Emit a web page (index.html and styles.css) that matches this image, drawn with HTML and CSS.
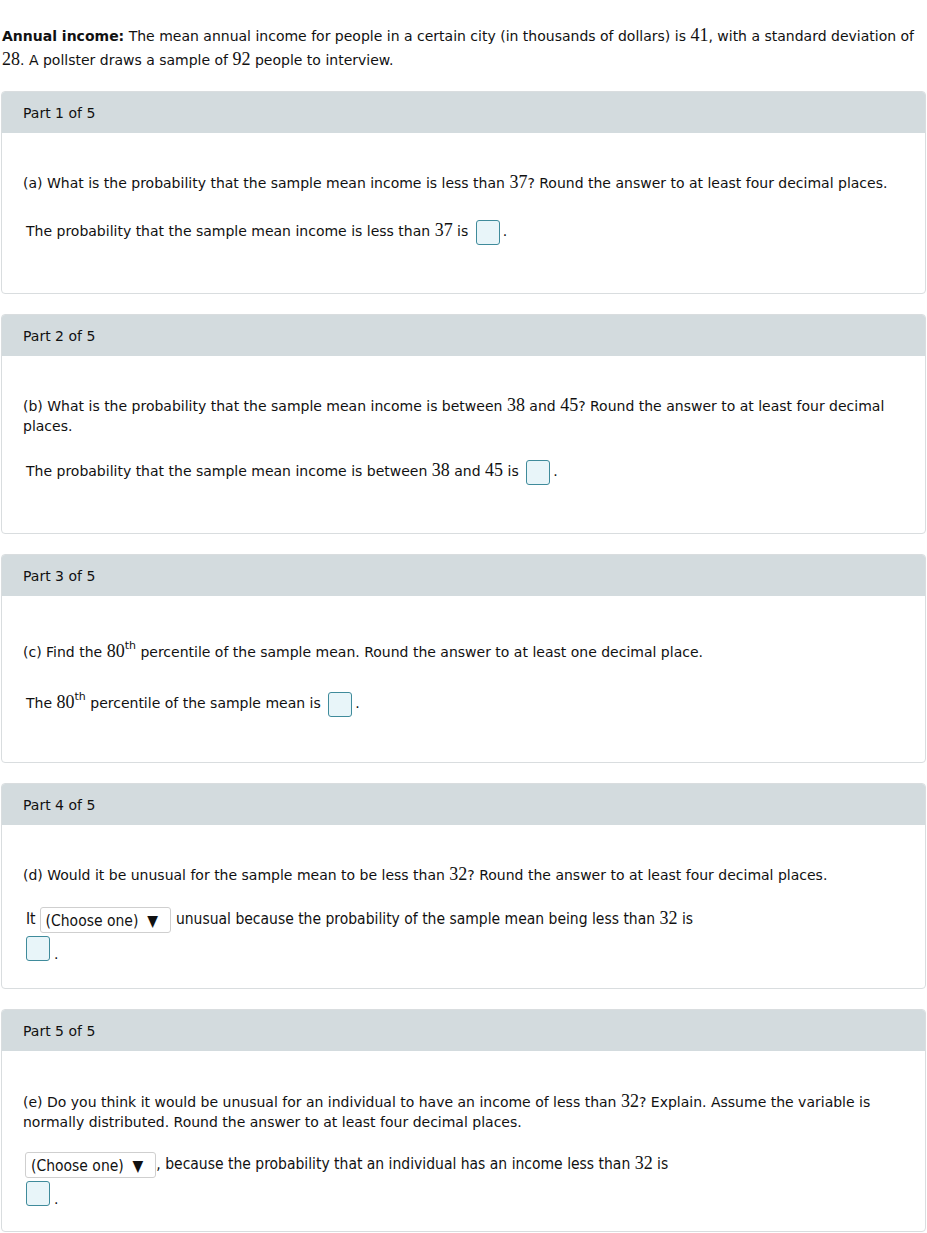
FILE: index.html
```html
<!DOCTYPE html>
<html>
<head>
<meta charset="utf-8">
<link rel="stylesheet" href="styles.css">
</head>
<body>
<p class="intro"><b>Annual income:</b> The mean annual income for people in a certain city (in thousands of dollars) is <span class="m">41</span>, with a standard deviation of <span class="m">28</span>. A pollster draws a sample of <span class="m">92</span> people to interview.</p>

<div class="card">
  <div class="head">Part 1 of 5</div>
  <div class="body">
    <p class="q q1">(a) What is the probability that the sample mean income is less than <span class="m">37</span>? Round the answer to at least four decimal places.</p>
    <p class="a">The probability that the sample mean income is less than <span class="m">37</span> is <span class="box"></span><span class="pd">.</span></p>
  </div>
</div>

<div class="card">
  <div class="head">Part 2 of 5</div>
  <div class="body">
    <p class="q">(b) What is the probability that the sample mean income is between <span class="m">38</span> and <span class="m">45</span>? Round the answer to at least four decimal places.</p>
    <p class="a">The probability that the sample mean income is between <span class="m">38</span> and <span class="m">45</span> is <span class="box"></span><span class="pd">.</span></p>
  </div>
</div>

<div class="card">
  <div class="head">Part 3 of 5</div>
  <div class="body b3">
    <p class="q q3">(c) Find the <span class="m">80</span><sup>th</sup> percentile of the sample mean. Round the answer to at least one decimal place.</p>
    <p class="a">The <span class="m">80</span><sup>th</sup> percentile of the sample mean is <span class="box"></span><span class="pd">.</span></p>
  </div>
</div>

<div class="card">
  <div class="head">Part 4 of 5</div>
  <div class="body tight b4">
    <p class="q q4">(d) Would it be unusual for the sample mean to be less than <span class="m">32</span>? Round the answer to at least four decimal places.</p>
    <div class="a2"><span class="it">It</span><span class="sel">(Choose one)&nbsp; ▼</span><span class="nar sp">unusual because the probability of the sample mean being less than <span class="m">32</span> is</span></div>
    <div class="a3"><span class="box"></span><span class="dot">.</span></div>
  </div>
</div>

<div class="card">
  <div class="head">Part 5 of 5</div>
  <div class="body tight b5">
    <p class="q q5">(e) Do you think it would be unusual for an individual to have an income of less than <span class="m">32</span>? Explain. Assume the variable is normally distributed. Round the answer to at least four decimal places.</p>
    <div class="a2"><span class="sel">(Choose one)&nbsp; ▼</span><span class="nar">, because the probability that an individual has an income less than <span class="m">32</span> is</span></div>
    <div class="a3"><span class="box"></span><span class="dot">.</span></div>
  </div>
</div>
</body>
</html>
```
FILE: styles.css
```css
body {
  margin: 0;
  padding: 0 1px 0 1px;
  font-family: "DejaVu Sans", Verdana, sans-serif;
  font-size: 14px;
  color: #111;
  background: #fff;
}
.intro {
  margin: 24px 0 19px 1px;
  line-height: 24px;
}
.m {
  font-family: "Liberation Serif", "Times New Roman", serif;
  font-size: 18px;
  line-height: 1;
}
sup {
  font-size: 11px;
  line-height: 0;
  vertical-align: 8px;
}
.card {
  border: 1px solid #d9dddf;
  border-radius: 4px;
  margin-bottom: 20px;
  overflow: hidden;
}
.head {
  background: #d3dbde;
  height: 41px;
  line-height: 42px;
  padding-left: 21px;
}
.body {
  padding: 40px 20px 47px 21px;
}
.body.b3 {
  padding-bottom: 44px;
}
.body.tight {
  padding-bottom: 25px;
}
.body.b4 {
  padding-bottom: 26px;
}
.body.b5 {
  padding-top: 41px;
  padding-bottom: 24px;
}
.q {
  margin: 0 0 20px 0;
  line-height: 20px;
}
.q1 { margin-bottom: 23px; }
.q3 { margin-top: 6px; margin-bottom: 26px; }
.q4 { margin-bottom: 20px; }
.q5 { margin-bottom: 18px; }
.a {
  margin: 0;
  padding-left: 3px;
  line-height: 30px;
  height: 30px;
}
.box {
  display: inline-block;
  width: 22px;
  height: 23px;
  border: 1.5px solid #3f8b9b;
  border-radius: 3px;
  background: #e8f5f9;
  vertical-align: middle;
  margin-left: 3px;
}
.pd { margin-left: 3px; }
.a2 {
  padding-left: 3px;
  line-height: 28px;
  height: 28px;
  white-space: nowrap;
}
.sel {
  display: inline-block;
  border: 1px solid #cfcfcf;
  border-radius: 3px;
  padding: 0 12px 0 5px;
  height: 24px;
  line-height: 26px;
  font-family: "DejaVu Sans Condensed", "Liberation Sans Narrow", "Liberation Sans", sans-serif;
  font-stretch: condensed;
  font-size: 15.5px;
  vertical-align: middle;
  background: #fff;
}
.a2 > .sel:first-child { margin-left: -1px; }
.nar, .it {
  font-family: "DejaVu Sans Condensed", "Liberation Sans Narrow", "Liberation Sans", sans-serif;
  font-stretch: condensed;
  font-size: 15.5px;
}
.it { margin-right: 4px; }
.sp { margin-left: 5px; }
.a3 {
  padding-left: 3px;
  margin-top: 3px;
  height: 26px;
}
.a3 .box { vertical-align: top; margin-left: 0; }
.dot { margin-left: 4px; vertical-align: -10px; }
```
